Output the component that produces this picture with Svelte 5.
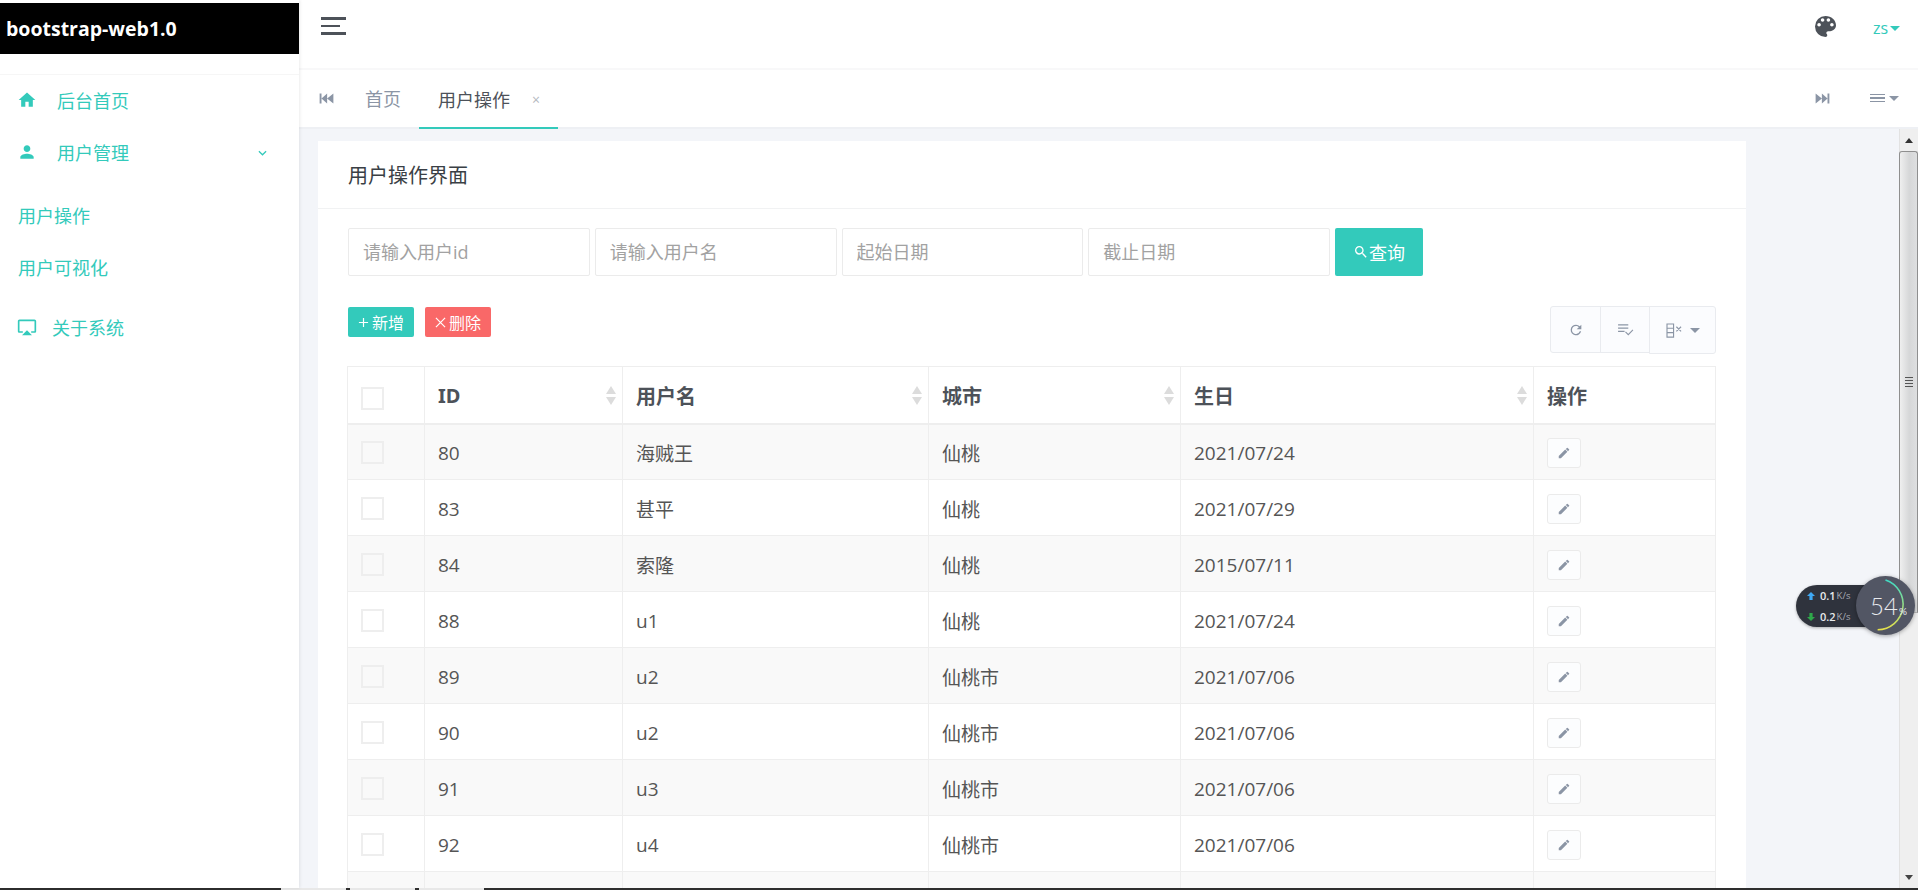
<script>
	const nav = [
		{ text: '后台首页', icon: 'M10 20v-6h4v6h5v-8h3L12 3 2 12h3v8z' },
		{ text: '用户管理', icon: 'M12 12c2.21 0 4-1.79 4-4s-1.79-4-4-4-4 1.79-4 4 1.79 4 4 4zm0 2c-2.67 0-8 1.34-8 4v2h16v-2c0-2.66-5.33-4-8-4z', open: true }
	];
	const subnav = ['用户操作', '用户可视化'];
	const placeholders = ['请输入用户id', '请输入用户名', '起始日期', '截止日期'];
	const columns = ['ID', '用户名', '城市', '生日'];
	const rows = [
		{ id: 80, name: '海贼王', city: '仙桃', birthday: '2021/07/24' },
		{ id: 83, name: '甚平', city: '仙桃', birthday: '2021/07/29' },
		{ id: 84, name: '索隆', city: '仙桃', birthday: '2015/07/11' },
		{ id: 88, name: 'u1', city: '仙桃', birthday: '2021/07/24' },
		{ id: 89, name: 'u2', city: '仙桃市', birthday: '2021/07/06' },
		{ id: 90, name: 'u2', city: '仙桃市', birthday: '2021/07/06' },
		{ id: 91, name: 'u3', city: '仙桃市', birthday: '2021/07/06' },
		{ id: 92, name: 'u4', city: '仙桃市', birthday: '2021/07/06' }
	];
	const pencil = 'M3 17.25V21h3.75L17.81 9.94l-3.75-3.75L3 17.25zM20.71 7.04a1 1 0 0 0 0-1.41l-2.34-2.34a1 1 0 0 0-1.41 0l-1.83 1.83 3.75 3.75 1.83-1.83z';
</script>

<div class="screen">
	<div class="window">
		<aside class="sidebar">
			<div class="logo">bootstrap-web1.0</div>
			<nav class="nav">
				{#each nav as item}
					<a class="nav-item">
						<svg class="nav-icon" viewBox="0 0 24 24"><path d={item.icon} /></svg>
						<span>{item.text}</span>
						{#if item.open}
							<svg class="chevron" viewBox="0 0 10 6"><path d="M1 1l4 4 4-4" /></svg>
						{/if}
					</a>
				{/each}
				<div class="subnav">
					{#each subnav as text}
						<a class="sub-item">{text}</a>
					{/each}
				</div>
				<a class="nav-item about">
					<svg class="nav-icon" viewBox="0 0 24 24">
						<path d="M6 22h12l-6-6zM21 3H3c-1.1 0-2 .9-2 2v12c0 1.1.9 2 2 2h4v-2H3V5h18v12h-4v2h4c1.1 0 2-.9 2-2V5c0-1.1-.9-2-2-2z" />
					</svg>
					<span>关于系统</span>
				</a>
			</nav>
		</aside>

		<div class="content">
			<header class="topbar">
				<div class="burger"><i></i><i class="short"></i><i></i></div>
				<div class="top-right">
					<svg class="palette" viewBox="3 3 18 18">
						<path d="M12 3a9 9 0 0 0 0 18c.83 0 1.5-.67 1.5-1.5 0-.39-.15-.74-.39-1.01-.23-.26-.38-.61-.38-.99 0-.83.67-1.5 1.5-1.5H16c2.76 0 5-2.24 5-5 0-4.42-4.03-8-9-8zm-5.5 9c-.83 0-1.5-.67-1.5-1.5S5.67 9 6.5 9 8 9.67 8 10.5 7.33 12 6.5 12zm3-4C8.67 8 8 7.33 8 6.5S8.67 5 9.5 5s1.5.67 1.5 1.5S10.33 8 9.5 8zm5 0c-.83 0-1.5-.67-1.5-1.5S13.67 5 14.5 5s1.5.67 1.5 1.5S15.33 8 14.5 8zm3 4c-.83 0-1.5-.67-1.5-1.5S16.67 9 17.5 9s1.5.67 1.5 1.5-.67 1.5-1.5 1.5z" />
					</svg>
					<span class="user">zs<b class="caret teal"></b></span>
				</div>
			</header>

			<div class="tabbar">
				<svg class="skip" viewBox="0 0 24 24"><path d="M1 4h3v16H1zM13 4v16L4 12zM23 4v16l-10-8z" /></svg>
				<a class="tab">首页</a>
				<a class="tab active">用户操作<span class="close">×</span></a>
				<div class="tab-right">
					<svg class="skip" viewBox="0 0 24 24"><path d="M20 4h3v16h-3zM11 4v16l9-8zM1 4v16l10-8z" /></svg>
					<span class="tab-menu"><span class="lines"><i></i><i></i><i></i></span><b class="caret grey"></b></span>
				</div>
			</div>

			<div class="workspace">
				<main class="page">
					<section class="card">
						<h4 class="card-title">用户操作界面</h4>
						<div class="card-body">
							<form class="filters">
								{#each placeholders as placeholder}
									<input type="text" {placeholder} />
								{/each}
								<button type="button" class="btn-query">
									<svg viewBox="0 0 24 24"><path d="M15.5 14h-.79l-.28-.27A6.471 6.471 0 0 0 16 9.5 6.5 6.5 0 1 0 9.5 16c1.61 0 3.09-.59 4.23-1.57l.27.28v.79l5 4.99L20.49 19l-4.99-5zm-6 0C7.01 14 5 11.99 5 9.5S7.01 5 9.5 5 14 7.01 14 9.5 11.99 14 9.5 14z" /></svg>查询
								</button>
							</form>

							<div class="actions">
								<div class="action-left">
									<button type="button" class="btn-small add">
										<svg viewBox="0 0 12 12"><path d="M6 1v10M1 6h10" /></svg>新增
									</button>
									<button type="button" class="btn-small del">
										<svg viewBox="0 0 12 12"><path d="M1 1l10 10M11 1L1 11" /></svg>删除
									</button>
								</div>
								<div class="tools">
									<button type="button" class="tool first">
										<svg viewBox="0 0 24 24"><path d="M17.65 6.35A7.96 7.96 0 0 0 12 4a8 8 0 1 0 7.75 10h-2.08A6 6 0 1 1 12 6c1.66 0 3.14.69 4.22 1.78L13 11h7V4l-2.35 2.35z" /></svg>
									</button>
									<button type="button" class="tool second">
										<svg viewBox="0 0 18 14"><path class="stroke" d="M1 2h11M1 5.5h11M1 9h7M9 9.5l3 3 5-5" /></svg>
									</button>
									<button type="button" class="tool third">
										<svg class="col-icon" viewBox="0 0 18 16"><path class="stroke" d="M1 1h7v14H1zM1 5.6h7M1 10.3h7M11 4l5 5M16 4l-5 5" /></svg>
										<b class="caret grey"></b>
									</button>
								</div>
							</div>

							<table>
								<colgroup>
									<col style="width: 77px" />
									<col style="width: 198px" />
									<col style="width: 306px" />
									<col style="width: 252px" />
									<col style="width: 353px" />
									<col />
								</colgroup>
								<thead>
									<tr>
										<th><span class="check"></span></th>
										{#each columns as col}
											<th class="sortable">
												{col}
												<svg class="sort" viewBox="0 0 12 19"><path d="M6 0l5 8H1zM6 19l-5-8h10z" /></svg>
											</th>
										{/each}
										<th>操作</th>
									</tr>
								</thead>
								<tbody>
									{#each rows as row}
										<tr>
											<td><span class="check"></span></td>
											<td>{row.id}</td>
											<td>{row.name}</td>
											<td>{row.city}</td>
											<td>{row.birthday}</td>
											<td>
												<button type="button" class="edit">
													<svg viewBox="0 0 24 24"><path d={pencil} /></svg>
												</button>
											</td>
										</tr>
									{/each}
									<tr><td></td><td></td><td></td><td></td><td></td><td></td></tr>
								</tbody>
							</table>
						</div>
					</section>
				</main>
				<div class="scrollbar">
					<div class="arrow up"></div>
					<div class="thumb"><i></i><i></i><i></i><i></i></div>
					<div class="arrow down"></div>
				</div>
			</div>
		</div>
	</div>

	<div class="taskbar"><i></i><i></i><i></i></div>

	<!-- floating net-speed widget -->
	<div class="speed">
		<div class="speed-pill">
			<div class="speed-row"><svg viewBox="0 0 10 10"><path class="up-arrow" d="M5 0l5 5H7v5H3V5H0z" /></svg><b>0.1</b><small>K/s</small></div>
			<div class="speed-row"><svg viewBox="0 0 10 10"><path class="down-arrow" d="M5 10L0 5h3V0h4v5h3z" /></svg><b>0.2</b><small>K/s</small></div>
		</div>
		<div class="speed-dial">
			<svg viewBox="0 0 60 60">
				<defs>
					<linearGradient id="dial" x1="0" y1="0" x2="0" y2="1">
						<stop offset="0" stop-color="#3fd9c4" />
						<stop offset="1" stop-color="#e6e04a" />
					</linearGradient>
				</defs>
				<path class="arc" d="M30 4 A26 26 0 0 1 22 54.7" stroke="url(#dial)" />
			</svg>
			<span class="pct">54<small>%</small></span>
		</div>
	</div>
</div>

<style>
	:global(body) {
		margin: 0;
		overflow: hidden;
	}
	.screen {
		height: 890px;
		display: flex;
		flex-direction: column;
		position: relative;
		overflow: hidden;
		font-family: 'Open Sans', 'Noto Sans CJK SC', sans-serif;
		font-size: 18px;
		color: #555;
		background: #f3f5f9;
	}
	.window {
		flex: 1;
		min-height: 0;
		display: flex;
	}

	/* SIDEBAR */
	.sidebar {
		width: 299px;
		flex-shrink: 0;
		background: #fff;
		padding-top: 3px;
		box-shadow: 1px 0 3px rgba(0, 0, 0, 0.08);
		position: relative;
		z-index: 1;
	}
	.logo {
		height: 51px;
		background: #000;
		color: #fff;
		font-weight: 700;
		font-size: 19.5px;
		line-height: 52px;
		padding-left: 6px;
	}
	.nav {
		margin-top: 20px;
		border-top: 1px solid #f6f6f6;
		color: #33cabb;
	}
	.nav-item {
		height: 52px;
		display: flex;
		align-items: center;
		padding-left: 17px;
		gap: 20px;
		position: relative;
	}
	.nav-item:first-child {
		margin-top: -1px;
	}
	.nav-icon {
		width: 20px;
		height: 20px;
		fill: #33cabb;
	}
	.chevron {
		position: absolute;
		left: 258px;
		top: 24px;
		width: 9px;
		height: 6px;
		fill: none;
		stroke: #33cabb;
		stroke-width: 1.4;
	}
	.subnav {
		padding: 11px 0 8px;
	}
	.sub-item {
		display: flex;
		align-items: center;
		height: 52px;
		padding-left: 18px;
	}
	.about {
		gap: 15px;
	}

	/* TOP BARS */
	.content {
		flex: 1;
		min-width: 0;
		display: flex;
		flex-direction: column;
	}
	.topbar {
		height: 68px;
		flex-shrink: 0;
		background: #fff;
		display: flex;
		align-items: flex-start;
		justify-content: space-between;
		border-bottom: 2px solid #f8f8f9;
	}
	.burger {
		margin: 17px 0 0 22px;
		width: 25px;
		display: flex;
		flex-direction: column;
		gap: 5px;
	}
	.burger i {
		display: block;
		height: 2.5px;
		background: #4d5259;
	}
	.burger .short {
		width: 19px;
	}
	.top-right {
		display: flex;
		margin-right: 18px;
		gap: 37px;
	}
	.palette {
		width: 21px;
		height: 21px;
		margin-top: 16px;
		fill: #4d5259;
	}
	.user {
		margin-top: 19px;
		color: #33cabb;
		font-size: 16px;
		line-height: 18px;
		display: flex;
		align-items: center;
		gap: 2px;
	}
	.caret {
		display: inline-block;
		width: 0;
		height: 0;
		border-style: solid;
		border-width: 5px 5px 0;
		border-color: currentColor transparent transparent;
	}
	.teal {
		color: #33cabb;
	}
	.grey {
		color: #8b95a5;
	}
	.tabbar {
		height: 56px;
		padding-bottom: 1px;
		flex-shrink: 0;
		background: #fff;
		border-bottom: 2px solid #eef0f4;
		box-sizing: content-box;
		display: flex;
		align-items: stretch;
		padding-left: 20px;
		color: #8b95a5;
	}
	.skip {
		width: 15px;
		height: 15px;
		align-self: center;
		fill: #8b95a5;
	}
	.tab {
		display: flex;
		align-items: center;
		padding: 0 18px 1px 20px;
		position: relative;
	}
	.tab:first-of-type {
		margin-left: 11px;
	}
	.tab.active {
		color: #4d5259;
		padding: 0 18px 1px 19px;
		box-shadow: inset 0 -2px 0 #33cabb;
		margin-bottom: -3px;
	}
	.close {
		margin-left: 22px;
		font-size: 14px;
		color: #b5b9bf;
	}
	.tab-right {
		margin-left: auto;
		display: flex;
		align-items: center;
		gap: 40px;
		padding-right: 19px;
	}
	.tab-menu {
		display: flex;
		align-items: center;
		gap: 4px;
	}
	.lines {
		width: 15px;
		display: flex;
		flex-direction: column;
		gap: 2px;
	}
	.lines i {
		display: block;
		height: 1.5px;
		background: #8b95a5;
	}

	/* PAGE */
	.workspace {
		flex: 1;
		min-height: 0;
		display: flex;
	}
	.page {
		flex: 1;
		min-width: 0;
		overflow: hidden;
		padding: 12px 0 0 19px;
	}
	.card {
		width: 1428px;
		background: #fff;
		padding-bottom: 40px;
	}
	.card-title {
		margin: 0;
		height: 67px;
		box-sizing: content-box;
		border-bottom: 1px solid #f1f2f3;
		padding-left: 30px;
		font-size: 20px;
		font-weight: 400;
		line-height: 69px;
		color: #3a3f45;
	}
	.card-body {
		padding: 19px 30px 0;
	}
	.filters {
		display: flex;
		gap: 5px;
	}
	input {
		width: 241.75px;
		height: 48px;
		box-sizing: border-box;
		border: 1px solid #ebebeb;
		border-radius: 2px;
		padding: 0 14px;
		font: inherit;
		color: #555;
		background: #fff;
		outline: none;
	}
	input::placeholder {
		color: #a2a2a2;
		opacity: 1;
	}
	.btn-query {
		width: 88px;
		height: 48px;
		margin-left: 0;
		border: 0;
		border-radius: 2px;
		background: #33cabb;
		color: #fff;
		font: inherit;
		display: flex;
		align-items: center;
		justify-content: center;
	}
	.btn-query svg {
		width: 16px;
		height: 16px;
		fill: #fff;
	}
	.actions {
		margin-top: 30px;
		display: flex;
		justify-content: space-between;
		align-items: flex-start;
	}
	.action-left {
		display: flex;
		gap: 11px;
		padding-top: 1px;
	}
	.btn-small {
		height: 30px;
		border: 0;
		border-radius: 2px;
		padding: 0;
		width: 66px;
		font: inherit;
		font-size: 16px;
		color: #fff;
		display: flex;
		align-items: center;
		justify-content: center;
		gap: 3px;
	}
	.btn-small svg {
		width: 11px;
		height: 11px;
		fill: none;
		stroke: #fff;
		stroke-width: 1.3;
	}
	.add {
		background: #33cabb;
	}
	.del {
		background: #f96868;
	}
	.tools {
		display: flex;
		align-items: flex-start;
	}
	.tool {
		height: 47px;
		border: 1px solid #e9ebef;
		background: #fbfcfe;
		padding: 0;
		margin-left: -1px;
		display: flex;
		align-items: center;
		justify-content: center;
	}
	.tool svg {
		fill: #8b95a5;
	}
	.tool .stroke {
		fill: none;
		stroke: #8b95a5;
		stroke-width: 1.2;
	}
	.first {
		width: 51px;
		border-radius: 3px 0 0 3px;
	}
	.first svg {
		width: 16px;
		height: 16px;
	}
	.second {
		width: 50px;
	}
	.second svg {
		width: 17px;
		height: 13px;
	}
	.third {
		width: 67px;
		height: 48px;
		gap: 7px;
		border-radius: 0 3px 3px 0;
		position: relative;
	}
	.col-icon {
		width: 17px;
		height: 15px;
	}

	/* TABLE */
	table {
		margin: 12px 0 0 -1px;
		width: 1369px;
		table-layout: fixed;
		border-collapse: collapse;
		font-size: 19px;
	}
	th,
	td {
		border: 1px solid #eeeeee;
		padding: 2px 13px 0;
		text-align: left;
		height: 56px;
		box-sizing: border-box;
	}
	thead th {
		height: 57px;
		border-bottom-width: 2px;
		font-family: 'Noto Sans', 'Noto Sans CJK SC', sans-serif;
		font-size: 20px;
		font-weight: 700;
		color: #4d5259;
		position: relative;
	}
	thead .check {
		margin-top: 5px;
	}
	tbody tr:nth-child(odd) {
		background: #f9f9f9;
	}
	.check {
		display: block;
		width: 23px;
		height: 23px;
		box-sizing: border-box;
		border: 2px solid #eeeeee;
		background: transparent;
	}
	.sort {
		position: absolute;
		right: 5px;
		top: 19px;
		width: 12px;
		height: 19px;
		fill: #dcdcdc;
	}
	.edit {
		display: block;
		width: 34px;
		height: 30px;
		border: 1px solid #ebebeb;
		border-radius: 3px;
		background: #fcfdfe;
		padding: 0;
	}
	.edit svg {
		display: block;
		width: 14px;
		height: 14px;
		margin: auto;
		fill: #8b95a5;
	}

	/* SCROLLBAR */
	.scrollbar {
		width: 19px;
		flex-shrink: 0;
		background: #efefef;
		display: flex;
		flex-direction: column;
		border-left: 1px solid #e2e2e2;
		box-sizing: border-box;
		position: relative;
	}
	.arrow {
		height: 22px;
		flex-shrink: 0;
		display: flex;
		align-items: center;
		justify-content: center;
	}
	.arrow::after {
		content: '';
		border-style: solid;
		border-color: transparent;
	}
	.up::after {
		border-width: 0 4.5px 5px;
		border-bottom-color: #333;
	}
	.down {
		margin-top: auto;
	}
	.down::after {
		border-width: 5px 4.5px 0;
		border-top-color: #444;
	}
	.thumb {
		height: 462px;
		box-sizing: border-box;
		margin-left: -1px;
		border: 1px solid #8f8f8f;
		border-bottom-color: #bbb;
		border-radius: 3px 3px 0 0;
		background: linear-gradient(90deg, #efefef, #d6d7d8 55%, #dedfe0);
		display: flex;
		flex-direction: column;
		justify-content: center;
		align-items: center;
		gap: 2px;
	}
	.thumb i {
		display: block;
		width: 8px;
		height: 1px;
		background: #555;
	}

	.taskbar {
		height: 2px;
		flex-shrink: 0;
		background: #2e2e2e;
		display: flex;
		gap: 4px;
		padding-left: 281px;
	}
	.taskbar i {
		display: block;
		width: 65px;
		background: #e8e8e8;
	}

	/* NET SPEED WIDGET */
	.speed {
		position: absolute;
		left: 1796px;
		top: 576px;
		width: 118px;
		height: 60px;
		color: #e8eaee;
		font-family: 'Open Sans', sans-serif;
	}
	.speed-pill {
		position: absolute;
		left: 0;
		top: 9px;
		width: 90px;
		height: 42px;
		border-radius: 21px;
		background: #2f333d;
		box-shadow: 0 1px 3px rgba(0, 0, 0, 0.3);
		padding-left: 11px;
		box-sizing: border-box;
	}
	.speed-row {
		height: 21px;
		display: flex;
		align-items: center;
		gap: 5px;
		font-size: 11px;
	}
	.speed-row svg {
		width: 8px;
		height: 8px;
	}
	.up-arrow {
		fill: #3fa9f5;
	}
	.down-arrow {
		fill: #2ea84a;
	}
	.speed-row b {
		font-weight: 600;
	}
	.speed-row small {
		font-size: 9.5px;
		color: #a8acb4;
		margin-left: -4px;
	}
	.speed-dial {
		position: absolute;
		left: 60px;
		top: 0;
		width: 59px;
		height: 59px;
		border-radius: 50%;
		background: #525664;
		box-shadow: 0 1px 4px rgba(0, 0, 0, 0.35);
		display: flex;
		align-items: center;
		justify-content: center;
	}
	.speed-dial svg {
		position: absolute;
		inset: 0;
	}
	.arc {
		fill: none;
		stroke-width: 1.6;
	}
	.pct {
		font-family: 'Lato', sans-serif;
		font-weight: 300;
		font-size: 24px;
		position: relative;
		left: 3px;
	}
	.pct small {
		font-size: 10px;
		font-weight: 400;
		margin-left: 1px;
	}
</style>
